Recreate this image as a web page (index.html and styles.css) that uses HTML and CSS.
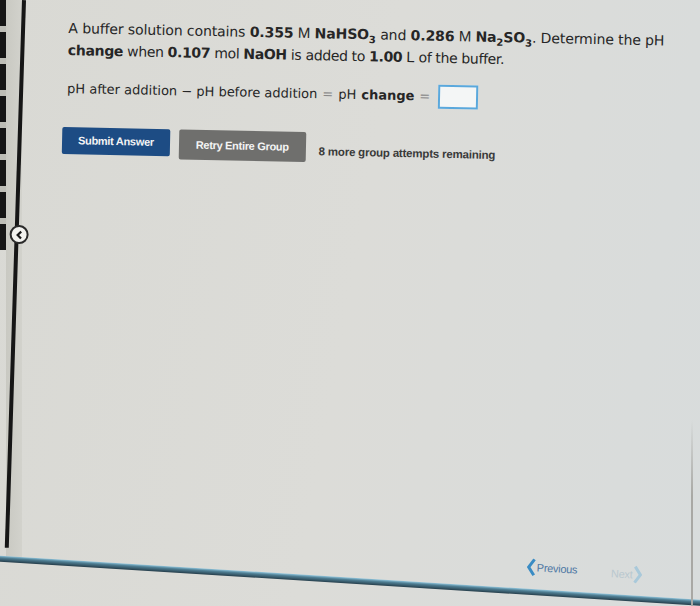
FILE: index.html
```html
<!DOCTYPE html>
<html lang="en">
<head>
    <meta charset="UTF-8">
    <meta name="viewport" content="width=device-width, initial-scale=1.0">
    <title>Buffer pH Change</title>
    <link rel="stylesheet" href="styles.css">
</head>
<body>
    <div class="bezel"></div>
    <div class="screen">
        <div class="question">
            <p class="prompt">
                A buffer solution contains <b>0.355</b> <span class="unit">M</span> <b>NaHSO<sub>3</sub></b> and <b>0.286</b> <span class="unit">M</span> <b>Na<sub>2</sub>SO<sub>3</sub></b>. Determine the pH<br>
                <span class="second-line"><b>change</b> when <b>0.107</b> mol <b>NaOH</b> is added to <b>1.00</b> <span class="unit">L</span> of the buffer.</span>
            </p>
            <p class="equation">
                pH after addition &minus; pH before addition <span class="op">=</span> pH <b>change</b> <span class="op">=</span> <span class="answer-box"></span>
            </p>
            <div class="actions">
                <button class="btn btn-submit">Submit Answer</button>
                <button class="btn btn-retry">Retry Entire Group</button>
                <span class="attempts">8 more group attempts remaining</span>
            </div>
        </div>
        <button class="collapse-toggle">
            <svg width="10" height="10" viewBox="0 0 10 10"><path d="M6.5 1.5 L3 5 L6.5 8.5" fill="none" stroke="#1a1a1a" stroke-width="2.2"/></svg>
        </button>
    </div>
    <div class="pager">
        <a class="pager-link prev">
            <svg width="9" height="18" viewBox="0 0 9 18"><path d="M7.5 1 L2 9 L7.5 17" fill="none" stroke="#3a8cc4" stroke-width="3"/></svg>
            Previous
        </a>
        <a class="pager-link next">
            Next
            <svg width="9" height="18" viewBox="0 0 9 18"><path d="M1.5 1 L7 9 L1.5 17" fill="none" stroke="#a9c9da" stroke-width="3"/></svg>
        </a>
    </div>
    <div class="frame-edge"></div>
    <div class="frame-side"></div>
</body>
</html>
```

FILE: styles.css
```css
body {
    font-family: 'DejaVu Sans', Verdana, sans-serif;
    background-color: #dbdbd7;
    background-image: linear-gradient(100deg, #d9d9d4 0%, #dcdcd8 50%, #d8dcdc 100%);
    color: #262626;
    margin: 0;
    padding: 0;
    width: 700px;
    height: 606px;
    overflow: hidden;
    position: relative;
}
.bezel {
    position: absolute;
    left: 0;
    top: 0;
    width: 22px;
    height: 560px;
    background: linear-gradient(90deg, transparent 0, transparent 6px, #c9c9c2 6px, #d2d2cc 22px);
}
.bezel::before {
    content: "";
    position: absolute;
    left: 0;
    top: 0;
    width: 6px;
    height: 250px;
    background: repeating-linear-gradient(180deg, #151515 0, #151515 26px, #bdbdb6 26px, #bdbdb6 32px);
}
.screen {
    position: relative;
    margin-left: 22px;
    height: 548px;
    border-left: 4px solid #161616;
    transform: rotate(1.8deg);
    transform-origin: top left;
}
.question {
    padding: 16px 0 0 43px;
    transform: rotate(-0.6deg);
    transform-origin: top left;
}
.prompt {
    font-size: 14px;
    line-height: 22px;
    margin: 0;
    letter-spacing: -0.1px;
}
.second-line {
    letter-spacing: -0.35px;
}
.prompt sub {
    font-size: 10px;
    line-height: 0;
}
.unit {
    font-family: 'Liberation Sans', Arial, sans-serif;
    font-size: 15px;
}
.equation {
    font-size: 13px;
    margin: 14px 0 0;
    display: flex;
    align-items: center;
    gap: 5px;
}
.op {
    color: #888;
}
.answer-box {
    display: inline-block;
    width: 36px;
    height: 20px;
    border: 2px solid #5aa8dc;
    background: #f4f6f6;
    margin-left: 3px;
    margin-top: 2px;
}
.actions {
    margin-top: 22px;
    display: flex;
    align-items: center;
    gap: 9px;
    margin-left: -4px;
}
.btn {
    font-family: 'Liberation Sans', Arial, sans-serif;
    font-weight: bold;
    font-size: 11px;
    letter-spacing: -0.3px;
    color: #f4f4f4;
    border: 0;
    border-radius: 2px;
    height: 27px;
    padding: 0 16px;
}
.btn-submit {
    background-color: #1d4c84;
}
.btn-retry {
    background-color: #6f6f6d;
    height: 30px;
    margin-top: 4px;
    padding: 0 17px;
}
.attempts {
    font-family: 'Liberation Sans', Arial, sans-serif;
    font-weight: bold;
    font-size: 11.5px;
    letter-spacing: -0.2px;
    color: #3a3a3a;
    margin-top: 12px;
    margin-left: 4px;
}
.collapse-toggle {
    position: absolute;
    left: -9px;
    top: 225px;
    width: 19px;
    height: 19px;
    border-radius: 50%;
    border: 2px solid #2a2a2a;
    background: #f2f2ef;
    padding: 0;
    display: flex;
    align-items: center;
    justify-content: center;
}
.pager {
    display: flex;
    justify-content: flex-end;
    gap: 30px;
    padding-right: 57px;
    margin-top: 17px;
    font-family: 'Liberation Sans', Arial, sans-serif;
    font-size: 11px;
    letter-spacing: -0.3px;
    transform: rotate(3deg);
    transform-origin: right top;
}
.pager-link {
    display: flex;
    align-items: center;
    gap: 1px;
}
.prev {
    color: #4f78a4;
    margin-right: 4px;
}
.next {
    color: #b9c8cf;
    margin-top: 4px;
}
.frame-edge {
    position: absolute;
    left: -10px;
    top: 555px;
    width: 712px;
    height: 6px;
    background: linear-gradient(180deg, #8fc3da 0, #4f7f94 35%, #263e4b 100%);
    transform: rotate(3.6deg);
    transform-origin: left top;
}
.frame-side {
    position: absolute;
    left: 691px;
    top: 420px;
    width: 2px;
    height: 190px;
    background: linear-gradient(180deg, transparent, #a8a8a4 40%);
}
```
